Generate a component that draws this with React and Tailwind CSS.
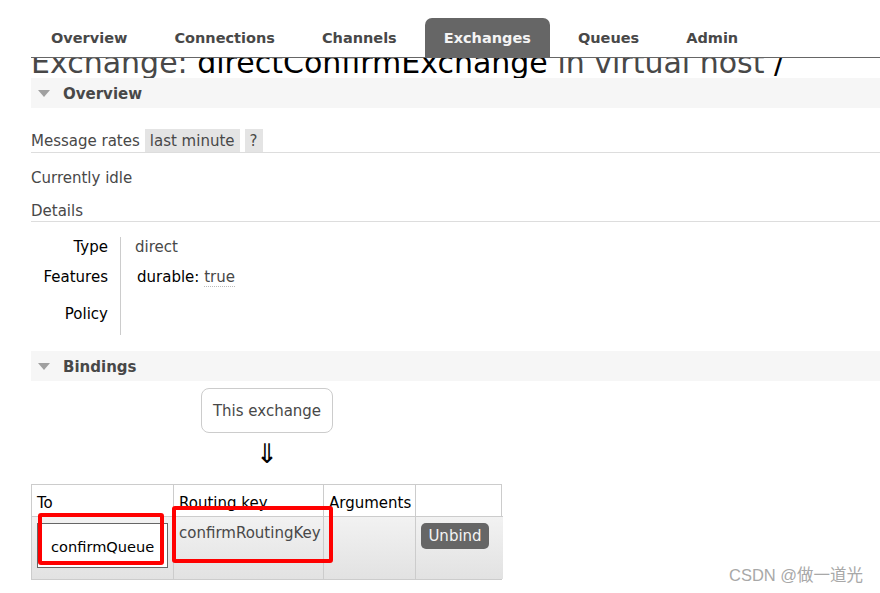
import React from "react";

const tabs = ["Overview", "Connections", "Channels", "Exchanges", "Queues", "Admin"];

function SectionHead({ title }) {
  return (
    <div className="relative flex items-center h-[30px] bg-[#f6f6f6] pl-[7px]">
      <svg width="12" height="8" viewBox="0 0 12 8" className="mr-[13px] mt-[1px]">
        <polygon points="0,0 12,0 6,7" fill="#a0a0a0" />
      </svg>
      <span className="pt-[2px] font-bold text-[15px] text-[#484848]">{title}</span>
    </div>
  );
}

export default function App() {
  return (
    <div
      className="relative w-[880px] h-[593px] overflow-hidden bg-white text-[#484848]"
      style={{ fontFamily: "'DejaVu Sans', Verdana, sans-serif" }}
    >
      {/* top nav */}
      <div className="relative z-10 bg-white pt-[18px] pl-[31px]">
        <div className="flex items-end gap-[9px] pl-[1px] border-b border-[#666]">
          {tabs.map((t) => (
            <div
              key={t}
              className={
                t === "Exchanges"
                  ? "h-[39px] flex items-center pt-[3px] px-[19px] rounded-t-[7px] bg-[#666] text-[#f4f4f4] font-bold text-[14.5px]"
                  : "h-[39px] flex items-center pt-[3px] px-[19px] text-[#484848] font-bold text-[14.5px]"
              }
            >
              {t}
            </div>
          ))}
        </div>
      </div>

      <div className="pl-[31px]">
        <h1 className="-mt-[13px] text-[30px] leading-[36px] whitespace-nowrap text-[#484848]">
          Exchange: <span className="text-black">directConfirmExchange</span> in virtual host{" "}
          <span className="text-black">/</span>
        </h1>

        <div className="-mt-[3px]">
          <SectionHead title="Overview" />
        </div>

        <div className="mt-[21px] flex items-center gap-[5px] h-[24px] pt-[2px] border-b border-[#ddd] text-[15px]">
          <span>Message rates</span>
          <span className="h-[23px] -mt-[2px] self-start flex items-center pt-[2px] px-[5px] bg-[#e4e4e4]">last minute</span>
          <span className="h-[23px] -mt-[2px] self-start flex items-center pt-[2px] px-[5px] bg-[#e4e4e4]">?</span>
        </div>

        <div className="mt-[15px] text-[15px] leading-[20px]">Currently idle</div>

        <div className="mt-[13px] text-[15px] leading-[20px] border-b border-[#ddd]">Details</div>

        <div className="mt-[15px] grid grid-cols-[90px_1fr] grid-rows-[30px_37px_31px] text-[15px] leading-[20px]">
          <div className="text-right pr-[12px] border-r border-[#ccc] text-black">Type</div>
          <div className="pl-[14px]">direct</div>
          <div className="text-right pr-[12px] border-r border-[#ccc] text-black">Features</div>
          <div className="pl-[16px]">
            <span className="text-black">durable:</span>{" "}
            <span className="border-b border-dotted border-[#bbb]">true</span>
          </div>
          <div className="text-right pr-[12px] border-r border-[#ccc] text-black">Policy</div>
          <div className="pl-[14px]"></div>
        </div>

        <div className="mt-[16px]">
          <SectionHead title="Bindings" />
        </div>

        <div className="mt-[7px] pl-[170px]">
          <div className="w-[132px] flex flex-col items-center">
            <div className="w-[132px] h-[45px] flex items-center justify-center pt-[1px] border border-[#ccc] rounded-[8px] text-[15px]">
              This exchange
            </div>
            <div className="mt-[8px] text-[27px] leading-[26px] text-black">⇓</div>
          </div>
        </div>

        <div className="relative mt-[17px] w-[471px]">
          <div className="grid grid-cols-[142px_150px_92px_87px] grid-rows-[32px_62px] border border-[#ccc] text-[15px] text-black">
            <div className="pl-[5px] pt-[8px] leading-[20px] border-r border-b border-[#ccc]">To</div>
            <div className="pl-[5px] pt-[8px] leading-[20px] border-r border-b border-[#ccc]">Routing key</div>
            <div className="pl-[5px] pt-[8px] leading-[20px] border-r border-b border-[#ccc]">Arguments</div>
            <div className="border-b border-[#ccc]"></div>

            <div className="px-[5px] pt-[6px] border-r border-[#ccc] bg-gradient-to-b from-[#f2f2f2] to-[#e2e2e2]">
              <div className="h-[45px] flex items-center pl-[13px] pt-[3px] bg-white border border-[#666] text-[14.6px] whitespace-nowrap">
                confirmQueue
              </div>
            </div>
            <div className="pl-[5px] pt-[6px] leading-[20px] text-[#484848] border-r border-[#ccc] bg-gradient-to-b from-[#f2f2f2] to-[#e2e2e2]">
              confirmRoutingKey
            </div>
            <div className="border-r border-[#ccc] bg-gradient-to-b from-[#f2f2f2] to-[#e2e2e2]"></div>
            <div className="pl-[5px] pt-[6px] bg-gradient-to-b from-[#f2f2f2] to-[#e2e2e2]">
              <div className="w-[68px] h-[26px] flex items-center justify-center pt-[1px] rounded-[5px] bg-[#666] text-[#f4f4f4]">
                Unbind
              </div>
            </div>
          </div>

          {/* red annotation boxes */}
          <div className="absolute left-[7px] top-[29px] w-[126px] h-[52px] border-4 border-[#ff0000] rounded-[3px]"></div>
          <div className="absolute left-[141px] top-[22px] w-[161px] h-[57px] border-4 border-[#ff0000] rounded-[3px]"></div>
        </div>
      </div>

      <div
        className="absolute left-[729px] top-[564px] text-[16.5px] leading-[22px] text-[#a8a8a8] whitespace-nowrap"
        style={{ fontFamily: "'Liberation Sans', 'Noto Sans CJK SC', sans-serif" }}
      >
        CSDN @做一道光
      </div>
    </div>
  );
}
